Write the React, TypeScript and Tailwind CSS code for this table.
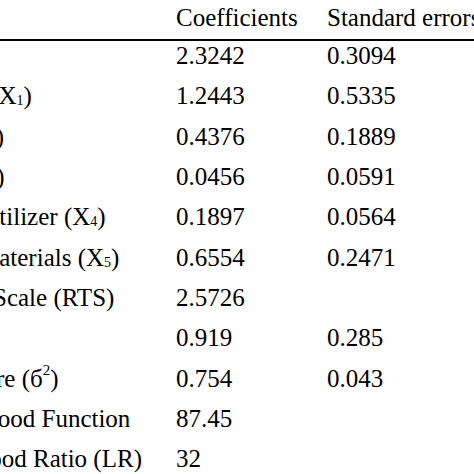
const rows = [
  { label: <>Constant</>, shift: '-ml-[200px]', coef: '2.3242', se: '0.3094' },
  {
    label: <>Farm size (X<span className="relative top-[1px] text-[14px]">1</span>)</>,
    shift: '-ml-[114px]',
    coef: '1.2443',
    se: '0.5335',
  },
  {
    label: <>Labour (X<span className="relative top-[1px] text-[14px]">2</span>)</>,
    shift: '-ml-[116px]',
    coef: '0.4376',
    se: '0.1889',
  },
  {
    label: <>Seed (X<span className="relative top-[1px] text-[14px]">3</span>)</>,
    shift: '-ml-[92px]',
    coef: '0.0456',
    se: '0.0591',
  },
  {
    label: <>Fertilizer (X<span className="relative top-[1px] text-[14px]">4</span>)</>,
    shift: '-ml-[34px]',
    coef: '0.1897',
    se: '0.0564',
  },
  {
    label: <>Materials (X<span className="relative top-[1px] text-[14px]">5</span>)</>,
    shift: '-ml-[23px]',
    coef: '0.6554',
    se: '0.2471',
  },
  { label: <>Return to Scale (RTS)</>, shift: '-ml-[107px]', coef: '2.5726', se: '' },
  { label: <>Gamma (γ)</>, shift: '-ml-[200px]', coef: '0.919', se: '0.285' },
  {
    label: <>Sigma square (б<span className="relative -top-[12px] text-[15px]">2</span>)</>,
    shift: '-ml-[120px]',
    coef: '0.754',
    se: '0.043',
  },
  { label: <>Log Likelihood Function</>, shift: '-ml-[121px]', coef: '87.45', se: '' },
  { label: <>Likelihood Ratio (LR)</>, shift: '-ml-[83px]', coef: '32', se: '' },
];

export default function App() {
  return (
    <div className="w-[474px] h-[474px] overflow-hidden bg-white text-black text-[25px] font-['Liberation_Serif','Times_New_Roman',serif]">
      <div className="grid grid-cols-[176px_151px_minmax(0,1fr)] h-[41px] pt-[3px] leading-[30px] border-b-2 border-black whitespace-nowrap">
        <div></div>
        <div>Coefficients</div>
        <div>Standard errors</div>
      </div>

      {rows.map((row, i) => (
        <div
          key={i}
          className="grid grid-cols-[176px_151px_minmax(0,1fr)] h-[40.35px] leading-[30px] whitespace-nowrap"
        >
          <div>
            <span className={`inline-block ${row.shift}`}>{row.label}</span>
          </div>
          <div>{row.coef}</div>
          <div>{row.se}</div>
        </div>
      ))}
    </div>
  );
}
